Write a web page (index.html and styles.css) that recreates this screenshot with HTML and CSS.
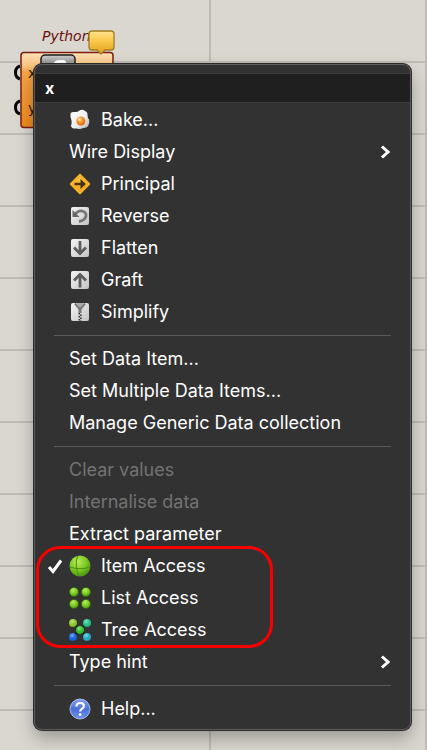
FILE: index.html
```
<!DOCTYPE html>
<html lang="en">
<head>
    <meta charset="UTF-8">
    <meta name="viewport" content="width=device-width, initial-scale=1.0">
    <title>Python component</title>
    <link rel="stylesheet" href="styles.css">
</head>
<body>
    <!-- component on the canvas, under the menu -->
    <div class="component">
        <span class="component-name">Python</span>
        <svg class="component-art" width="108" height="108" viewBox="14 26 108 108" aria-hidden="true">
            <defs>
                <linearGradient id="body" x1="0" y1="0" x2="0" y2="1">
                    <stop offset="0" stop-color="#fde0b4"/>
                    <stop offset=".18" stop-color="#fbc583"/>
                    <stop offset=".26" stop-color="#f7a649"/>
                    <stop offset="1" stop-color="#ef8a1d"/>
                </linearGradient>
                <linearGradient id="tip" x1="0" y1="0" x2="0" y2="1">
                    <stop offset="0" stop-color="#ffe490"/>
                    <stop offset=".4" stop-color="#fccb50"/>
                    <stop offset="1" stop-color="#e3a01c"/>
                </linearGradient>
                <linearGradient id="chip" x1="0" y1="0" x2="0" y2="1">
                    <stop offset="0" stop-color="#d0d0d0"/>
                    <stop offset=".3" stop-color="#777"/>
                </linearGradient>
            </defs>
            <path d="M20 66q-4.500 1.500-4.500 6.500t4.500 6.500M20 101q-4.500 1.500-4.500 6.500t4.500 6.500" fill="none" stroke="#080808" stroke-width="3"/>
            <rect x="21" y="52.500" width="92" height="75" rx="3" fill="url(#body)" stroke="#7b1d10" stroke-width="1.500"/>
            <rect x="41" y="55" width="34" height="40" rx="4" fill="url(#chip)" stroke="#1d1d26" stroke-width="1.500"/>
            <path d="M54 63q1-3 5-3h5q2 0 2 3z" fill="#fff"/>
            <path d="M92 31h19q3 0 3 3v13q0 3-3 3h-6l-4 4-4-4h-5q-3 0-3-3v-13q0-3 3-3z" fill="url(#tip)" stroke="#a17c20" stroke-width="1.300"/>
        </svg>
        <span class="port port-x">x</span>
        <span class="port port-y">y</span>
    </div>

    <main class="menu">
        <h1 class="menu-title">x</h1>
        <div class="menu-list" role="menu">
            <button class="item" role="menuitem">
                <svg class="icon" viewBox="0 0 22 22" aria-hidden="true">
                    <defs>
                        <radialGradient id="yolk" cx=".4" cy=".35" r=".7">
                            <stop offset="0" stop-color="#ffd08a"/>
                            <stop offset=".4" stop-color="#ff9a30"/>
                            <stop offset="1" stop-color="#dd5c08"/>
                        </radialGradient>
                        <linearGradient id="white" x1="0" y1="0" x2="1" y2="1">
                            <stop offset="0" stop-color="#fff"/>
                            <stop offset=".6" stop-color="#eee"/>
                            <stop offset="1" stop-color="#aaa"/>
                        </linearGradient>
                    </defs>
                    <path d="M1.500 4.500q.5-2 4-1.500 3 .5 5-1.500 3-1.500 5.500.5 3 1 2.500 4.500 0 2 1.500 4 1 3-.5 5.500-1 3-5 3-4 1.500-7 .5-5 .5-5.500-2.500 1-3 .5-5.500-1.500-3.500-1-7z" fill="url(#white)"/>
                    <circle cx="11.800" cy="12" r="4.500" fill="url(#yolk)"/>
                    <circle cx="10.500" cy="10.500" r="1.300" fill="#fff3d8"/>
                </svg>
                Bake...
            </button>
            <button class="item" role="menuitem" aria-haspopup="true">
                Wire Display
                <svg class="arrow" viewBox="0 0 10 16" aria-hidden="true"><path d="M2 2.500l6 5.500-6 5.500"/></svg>
            </button>
            <button class="item" role="menuitem">
                <svg class="icon" viewBox="0 0 22 22" aria-hidden="true">
                    <defs>
                        <linearGradient id="sign" x1="0" y1="0" x2="0" y2="1">
                            <stop offset="0" stop-color="#ffc93f"/>
                            <stop offset="1" stop-color="#f2a01b"/>
                        </linearGradient>
                    </defs>
                    <path d="M11 1.800l9.200 9.200-9.200 9.200-9.200-9.200z" fill="url(#sign)" stroke="#f7b02a" stroke-width="2" stroke-linejoin="round"/>
                    <path d="M5.500 9.700h6v-3.700l5.500 5-5.500 5v-3.700h-6z" fill="#4a3210"/>
                </svg>
                Principal
            </button>
            <button class="item" role="menuitem">
                <svg class="icon" viewBox="0 0 22 22" aria-hidden="true">
                    <defs>
                        <linearGradient id="tile" x1="0" y1="0" x2="1" y2="1">
                            <stop offset="0" stop-color="#f4f4f4"/>
                            <stop offset="1" stop-color="#c4c4c4"/>
                        </linearGradient>
                    </defs>
                    <rect x="2" y="2" width="18" height="18" rx="2" fill="url(#tile)"/>
                    <path d="M6.500 9q2.500-3.500 6.500-3 4.500 1 4 5-1 4.500-7 5.500" fill="none" stroke="#757575" stroke-width="2.800"/>
                    <path d="M3.500 5v7h7z" fill="#666"/>
                </svg>
                Reverse
            </button>
            <button class="item" role="menuitem">
                <svg class="icon" viewBox="0 0 22 22" aria-hidden="true">
                    <rect x="2" y="2" width="18" height="18" rx="2" fill="url(#tile)"/>
                    <path d="M11 4v12M5 10.500l6 6 6-6" fill="none" stroke="#5c5c5c" stroke-width="2.800"/>
                </svg>
                Flatten
            </button>
            <button class="item" role="menuitem">
                <svg class="icon" viewBox="0 0 22 22" aria-hidden="true">
                    <rect x="2" y="2" width="18" height="18" rx="2" fill="url(#tile)"/>
                    <path d="M11 18.500v-12M5 11.500l6-6 6 6" fill="none" stroke="#5c5c5c" stroke-width="2.800"/>
                </svg>
                Graft
            </button>
            <button class="item" role="menuitem">
                <svg class="icon" viewBox="0 0 22 22" aria-hidden="true">
                    <rect x="2" y="2" width="18" height="18" rx="2" fill="url(#tile)"/>
                    <path d="M7.500 2h7l-3.500 5z" fill="#a8a8a8"/>
                    <path d="M6 2.500l5 6 5-6" fill="none" stroke="#777" stroke-width="2"/>
                    <path d="M11 7v5" stroke="#777" stroke-width="3"/>
                    <path d="M10.300 12v8" stroke="#333" stroke-width="1.600" stroke-dasharray="1.500 1.500"/>
                    <path d="M11.900 13.500v6.500" stroke="#333" stroke-width="1.600" stroke-dasharray="1.500 1.500"/>
                </svg>
                Simplify
            </button>

            <hr class="line">

            <button class="item" role="menuitem">Set Data Item...</button>
            <button class="item" role="menuitem">Set Multiple Data Items...</button>
            <button class="item" role="menuitem">Manage Generic Data collection</button>

            <hr class="line">

            <button class="item" role="menuitem" disabled>Clear values</button>
            <button class="item" role="menuitem" disabled>Internalise data</button>
            <button class="item" role="menuitem">Extract parameter</button>

            <div class="access" role="group">
                <button class="item" role="menuitemradio" aria-checked="true">
                    <svg class="check" viewBox="0 0 16 16" aria-hidden="true"><path d="M2 9l4 4.500 8-11"/></svg>
                    <svg class="icon" viewBox="0 0 22 22" aria-hidden="true">
                        <defs>
                            <radialGradient id="green" cx=".4" cy=".3" r=".75">
                                <stop offset="0" stop-color="#b8ee58"/>
                                <stop offset=".55" stop-color="#7cc824"/>
                                <stop offset="1" stop-color="#43900e"/>
                            </radialGradient>
                        </defs>
                        <circle cx="11" cy="11" r="10.500" fill="url(#green)"/>
                        <path d="M1 12q10 3.500 20 0M8.500 1q-3 10 1.500 20" fill="none" stroke="#4a9014" stroke-width="1"/>
                    </svg>
                    Item Access
                </button>
                <button class="item" role="menuitemradio" aria-checked="false">
                    <svg class="icon" viewBox="0 0 22 22" aria-hidden="true">
                        <g fill="url(#green)" stroke="#2c5c0c" stroke-width=".7">
                            <circle cx="5" cy="5" r="4.600"/>
                            <circle cx="17" cy="5" r="4.600"/>
                            <circle cx="5" cy="17" r="4.600"/>
                            <circle cx="17" cy="17" r="4.600"/>
                        </g>
                    </svg>
                    List Access
                </button>
                <button class="item" role="menuitemradio" aria-checked="false">
                    <svg class="icon" viewBox="0 0 22 22" aria-hidden="true">
                        <defs>
                            <radialGradient id="shine" cx=".4" cy=".3" r=".7">
                                <stop offset="0" stop-color="#fff" stop-opacity=".45"/>
                                <stop offset=".6" stop-color="#fff" stop-opacity="0"/>
                                <stop offset="1" stop-color="#000" stop-opacity=".2"/>
                            </radialGradient>
                        </defs>
                        <path d="M4 4l14 14M18 4l-14 14" stroke="#101810" stroke-width="2.500"/>
                        <circle cx="4" cy="4" r="4" fill="#8cc822"/>
                        <circle cx="18" cy="4" r="4" fill="#22c088"/>
                        <circle cx="11" cy="11" r="4" fill="#2fbe2a"/>
                        <circle cx="4" cy="18" r="4" fill="#1262e0"/>
                        <circle cx="18" cy="18" r="4" fill="#1fabc4"/>
                        <g fill="url(#shine)">
                            <circle cx="4" cy="4" r="4"/>
                            <circle cx="18" cy="4" r="4"/>
                            <circle cx="11" cy="11" r="4"/>
                            <circle cx="4" cy="18" r="4"/>
                            <circle cx="18" cy="18" r="4"/>
                        </g>
                    </svg>
                    Tree Access
                </button>
            </div>

            <button class="item" role="menuitem" aria-haspopup="true">
                Type hint
                <svg class="arrow" viewBox="0 0 10 16" aria-hidden="true"><path d="M2 2.500l6 5.500-6 5.500"/></svg>
            </button>

            <hr class="line">

            <button class="item" role="menuitem">
                <svg class="icon" viewBox="0 0 22 22" aria-hidden="true">
                    <defs>
                        <linearGradient id="blue" x1="0" y1="0" x2="0" y2="1">
                            <stop offset="0" stop-color="#86a2ea"/>
                            <stop offset=".5" stop-color="#4a6fd8"/>
                            <stop offset="1" stop-color="#6f93ee"/>
                        </linearGradient>
                    </defs>
                    <circle cx="11" cy="11" r="10" fill="url(#blue)" stroke="#a9baf0" stroke-width="1"/>
                    <path d="M7.500 8.500q0-3.500 3.700-3.500t3.700 3q0 1.700-2 2.900-1.700 1-1.700 2.600" fill="none" stroke="#fff" stroke-width="2.200"/>
                    <circle cx="11.100" cy="16.600" r="1.400" fill="#fff"/>
                </svg>
                Help...
            </button>
        </div>
    </main>
</body>
</html>
```
FILE: styles.css
```
*,
*::after {
    box-sizing: border-box;
}
body {
    margin: 0;
    min-height: 100vh;
    padding: 64px 16px 19px 34px;
    position: relative;
    font-family: Inter, "Liberation Sans", sans-serif;
    background-color: #dad7d0;
    background-image:
        linear-gradient(#bfbcb5 2px, transparent 2px),
        linear-gradient(90deg, #bfbcb5 2px, transparent 2px);
    background-size: 216px 72px;
    background-position: -7px 61px;
}

/* canvas component */
.component {
    position: absolute;
    left: 14px;
    top: 26px;
    width: 108px;
    height: 108px;
    font-family: "DejaVu Sans", sans-serif;
}
.component-name {
    position: absolute;
    left: 28px;
    top: 0;
    font-size: 14px;
    line-height: 20px;
    font-style: italic;
    color: #6b1010;
}
.component-art {
    position: absolute;
    left: 0;
    top: 0;
}
.port {
    position: absolute;
    left: 14px;
    font-size: 14px;
    line-height: 20px;
    color: #2a1604;
}
.port-x {
    top: 37px;
}
.port-y {
    top: 72px;
}

/* context menu */
.menu {
    position: relative;
    padding: 8px 0 4px;
    background: #323232;
    border: 1px solid #5e5e5e;
    border-radius: 8px;
    box-shadow: 0 0 0 1px #2a2a2a, 0 8px 18px rgba(0, 0, 0, 0.3);
}
.menu-title {
    margin: 0;
    padding: 0 10px;
    background: #1f1f1f;
    border-top: 1px solid #3c3c3c;
    border-bottom: 1px solid #3c3c3c;
    color: #fff;
    font-size: 16px;
    font-weight: 700;
    line-height: 28px;
}
.menu-list {
    padding-top: 1px;
}
.item {
    position: relative;
    display: flex;
    align-items: center;
    gap: 10px;
    width: 100%;
    height: 32px;
    padding: 0 20px 0 34px;
    border: 0;
    background: none;
    color: #fff;
    font-family: inherit;
    font-size: 18px;
    line-height: 24px;
    text-align: left;
}
.item:disabled {
    color: #737373;
}
.icon {
    width: 22px;
    height: 22px;
    flex: none;
}
.arrow {
    width: 10px;
    height: 16px;
    margin-left: auto;
    fill: none;
    stroke: #fff;
    stroke-width: 3;
}
.check {
    position: absolute;
    left: 12px;
    top: 8px;
    width: 16px;
    height: 16px;
    fill: none;
    stroke: #fff;
    stroke-width: 3;
}
.line {
    margin: 7px 19px;
    border: 0;
    border-top: 1px solid #5a5a5a;
}

/* red outline around the access types */
.access {
    position: relative;
}
.access::after {
    content: "";
    position: absolute;
    left: 1px;
    top: -4px;
    bottom: -2px;
    width: 237px;
    border: 3px solid #f80000;
    border-radius: 24px;
    pointer-events: none;
}
```
